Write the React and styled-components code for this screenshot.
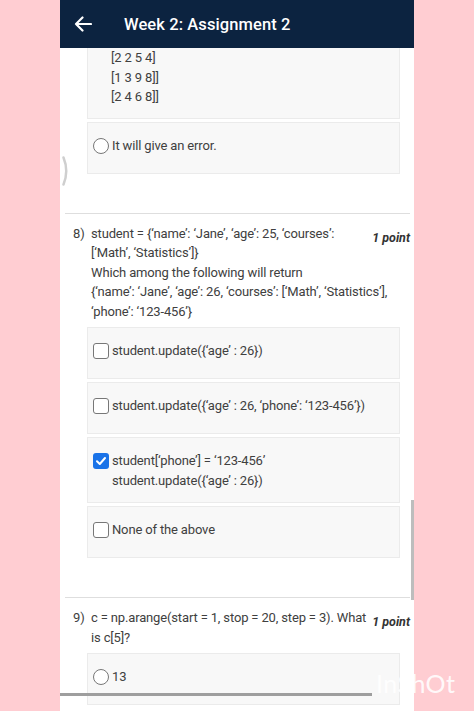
import React from 'react'
import styled, { createGlobalStyle } from 'styled-components'

const GlobalStyle = createGlobalStyle`
 html, body {
  margin: 0;
  padding: 0;
  background: #ffcdd2;
 }
 * {
  box-sizing: border-box;
 }
`

const Page = styled.div`
 height: 711px;
 overflow: hidden;
 display: flex;
 justify-content: center;
 background: #ffcdd2;
 font-family: Roboto, 'Liberation Sans', sans-serif;
`

const Phone = styled.div`
 position: relative;
 width: 354px;
 background: #fff;
 display: flex;
 flex-direction: column;
`

const Header = styled.header`
 height: 48px;
 flex-shrink: 0;
 background: #0c2340;
 display: flex;
 align-items: center;
 padding-left: 14px;
 color: #fff;
 h1 {
  margin: 0 0 0 32px;
  font-size: 16.5px;
  font-weight: 500;
  letter-spacing: 0.1px;
 }
`

const Body = styled.main`
 padding: 0 4px 0 5px;
 color: #404040;
 font-size: 13px;
 letter-spacing: -0.15px;
 line-height: 19.5px;
`

const Options = styled.div`
 display: flex;
 flex-direction: column;
 gap: 3px;
 margin: ${(p) => (p.$clipped ? '0' : '6px')} 10px 0 22px;
`

const Option = styled.div`
 display: flex;
 align-items: flex-start;
 gap: 3px;
 min-height: 52px;
 padding: 13px 5px 12px;
 background: #f8f8f8;
 border: 1px solid #ebebeb;
`

// top of this box is scrolled under the header
const CodeBox = styled.div`
 padding: 0 0 11px 23px;
 background: #f8f8f8;
 border: 1px solid #ebebeb;
 border-top: none;
`

const Radio = styled.span`
 flex-shrink: 0;
 width: 16px;
 height: 16px;
 margin-top: 2px;
 border: 1.5px solid #777;
 border-radius: 50%;
 background: #fff;
`

const Box = styled.span`
 flex-shrink: 0;
 width: 16px;
 height: 16px;
 margin-top: 2px;
 border-radius: 3px;
 display: flex;
 align-items: center;
 justify-content: center;
 border: ${(p) => (p.$checked ? 'none' : '1.5px solid #777')};
 background: ${(p) => (p.$checked ? '#1a73e8' : '#fff')};
`

const Question = styled.section`
 margin-top: 39px;
 border-top: 1px solid #dedede;
 padding-top: 10px;
`

const Title = styled.div`
 display: flex;
 padding-left: 8px;
 .num {
  width: 18px;
  flex-shrink: 0;
 }
 .text {
  flex: 1;
 }
`

const Points = styled.span`
 float: right;
 margin: 4px 0 0 0;
 font-size: 12.5px;
 font-weight: 700;
 font-style: italic;
 letter-spacing: 0;
 color: #333;
`

const Scroll = styled.div`
 position: absolute;
 right: 0;
 top: 500px;
 width: 3px;
 height: 100px;
 background: #bdbdbd;
`

const Progress = styled.div`
 position: absolute;
 left: 0;
 top: 693px;
 width: 312px;
 height: 3px;
 background: #9e9e9e;
`

const Edge = styled.svg`
 position: absolute;
 left: 2px;
 top: 156px;
`

const Mark = styled.div`
 position: absolute;
 left: 376px;
 top: 668px;
 font-family: Lato, 'Open Sans', sans-serif;
 font-size: 25px;
 font-weight: 400;
 color: rgba(255, 255, 255, 0.9);
 letter-spacing: 0.5px;
`

const Check = () => (
 <svg width="12" height="12" viewBox="0 0 12 12">
  <path d="M2 6.3 L4.8 9 L10 3" fill="none" stroke="#fff" strokeWidth="2" strokeLinecap="round" strokeLinejoin="round" />
 </svg>
)

const BackArrow = () => (
 <svg width="18" height="18" viewBox="0 0 18 18">
  <path d="M17 9 H2 M8.5 2.5 L2 9 L8.5 15.5" fill="none" stroke="#fff" strokeWidth="2.2" strokeLinecap="round" strokeLinejoin="round" />
 </svg>
)

const Choice = ({ type, checked, children }) => (
 <Option>
  {type === 'radio' ? <Radio /> : <Box $checked={checked}>{checked && <Check />}</Box>}
  <span>{children}</span>
 </Option>
)

const App = () => {
 return (
  <Page>
   <GlobalStyle />
   <Phone>
    <Header>
     <BackArrow />
     <h1>Week 2: Assignment 2</h1>
    </Header>
    <Body>
     <Options $clipped>
      <CodeBox>
       [2 2 5 4]
       <br />
       [1 3 9 8]]
       <br />
       [2 4 6 8]]
      </CodeBox>
      <Choice type="radio">It will give an error.</Choice>
     </Options>

     <Question>
      <Title>
       <span className="num">8)</span>
       <div className="text">
        <Points>1 point</Points>
        student = {'{'}‘name’: ‘Jane’, ‘age’: 25, ‘courses’: [‘Math’, ‘Statistics’]{'}'}
        <br />
        Which among the following will return
        <br />
        {'{'}‘name’: ‘Jane’, ‘age’: 26, ‘courses’: [‘Math’, ‘Statistics’], ‘phone’: ‘123-456’{'}'}
       </div>
      </Title>
      <Options>
       <Choice>student.update({'{'}‘age’ : 26{'}'})</Choice>
       <Choice>student.update({'{'}‘age’ : 26, ‘phone’: ‘123-456’{'}'})</Choice>
       <Choice checked>
        student[‘phone’] = ‘123-456’
        <br />
        student.update({'{'}‘age’ : 26{'}'})
       </Choice>
       <Choice>None of the above</Choice>
      </Options>
     </Question>

     <Question>
      <Title>
       <span className="num">9)</span>
       <div className="text">
        <Points>1 point</Points>
        c = np.arange(start = 1, stop = 20, step = 3). What is c[5]?
       </div>
      </Title>
      <Options>
       <Choice type="radio">13</Choice>
      </Options>
     </Question>
    </Body>
    <Edge width="8" height="30" viewBox="0 0 8 30">
     <path d="M1.5 1.5 Q7 15 1.5 28.5" fill="none" stroke="#cfcfcf" strokeWidth="2.5" strokeLinecap="round" />
    </Edge>
    <Scroll />
    <Progress />
   </Phone>
   <Mark>InShOt</Mark>
  </Page>
 )
}

export default App
